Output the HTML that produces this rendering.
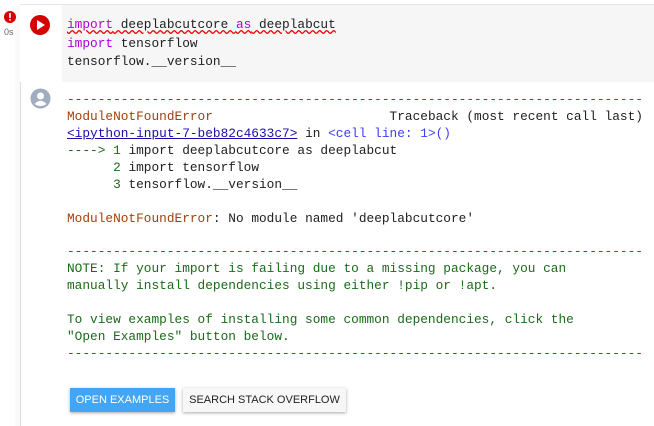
<!DOCTYPE html>
<html><head><style>
body{margin:0;width:654px;height:426px;background:#fff;overflow:hidden;position:relative;font-family:"Liberation Mono",monospace;}
.mono{font-family:"Liberation Mono",monospace;font-size:12.8px;white-space:pre;position:absolute;left:67px;}
.code{top:16px;line-height:18.5px;color:#212121;}
.out{top:92px;line-height:16.93px;color:#212121;}
.kw{color:#af00db}
.r{color:#a0410d}
.g{color:#1a6b1a}
.b{color:#3c3cff}
.lk{color:#1a0dab;text-decoration:underline}
.red{color:#b22222}
.btn{position:absolute;top:388px;height:24px;font-family:"Liberation Sans",sans-serif;font-size:11px;line-height:24px;text-align:center;box-shadow:0 1px 3px rgba(0,0,0,.35);}
</style></head><body>
<div style="position:absolute;left:20px;top:4px;width:634px;height:1px;background:#e4e4e4"></div>
<div style="position:absolute;left:20px;top:5px;width:634px;height:77px;background:#f6f6f6"></div>
<div style="position:absolute;left:15px;top:5px;width:5px;height:421px;background:#fafafa;border-right:1px solid #dcdcdc"></div>
<div style="position:absolute;left:20px;top:5px;width:42px;height:77px;background:#fff"></div>
<svg style="position:absolute;left:0;top:10px" width="20" height="30"><circle cx="10" cy="7" r="6" fill="#d50000"/><rect x="9.2" y="3" width="1.6" height="5" fill="#fff"/><rect x="9.2" y="9" width="1.6" height="1.6" fill="#fff"/><text x="4" y="25" font-family="Liberation Sans" font-size="9" fill="#666">0s</text></svg>
<svg style="position:absolute;left:29px;top:14px" width="22" height="22"><circle cx="11" cy="11" r="10" fill="#d50000"/><path d="M8 6 L16 11 L8 16Z" fill="#fff"/></svg>
<svg style="position:absolute;left:30px;top:88px" width="22" height="22"><circle cx="10.5" cy="10.5" r="10" fill="#a0acc0"/><circle cx="10.5" cy="8" r="3.5" fill="#fff"/><path d="M4.5 16 Q10.5 9.5 16.5 16 Q10.5 20 4.5 16Z" fill="#fff"/></svg>
<div class="mono code"><span class="kw" style="text-decoration:underline wavy #e00;">import</span><span style="text-decoration:underline wavy #e00;"> deeplabcutcore <span class="kw">as</span> deeplabcut</span>
<span class="kw">import</span> tensorflow
tensorflow.__version__</div>
<div class="mono out"><span class="red">---------------------------------------------------------------------------</span>
<span class="r">ModuleNotFoundError</span>                       Traceback (most recent call last)
<span class="lk">&lt;ipython-input-7-beb82c4633c7&gt;</span> in <span class="b">&lt;cell line: 1&gt;()</span>
<span class="g">----&gt; 1</span> import deeplabcutcore as deeplabcut
<span class="g">      2</span> import tensorflow
<span class="g">      3</span> tensorflow.__version__

<span class="r">ModuleNotFoundError</span>: No module named 'deeplabcutcore'

<span class="red">---------------------------------------------------------------------------</span>
<span class="g">NOTE: If your import is failing due to a missing package, you can
manually install dependencies using either !pip or !apt.

To view examples of installing some common dependencies, click the
"Open Examples" button below.</span>
<span class="red">---------------------------------------------------------------------------</span></div>
<div class="btn" style="left:70px;width:105px;background:#42a5f5;color:#fff">OPEN EXAMPLES</div>
<div class="btn" style="left:183px;width:163px;background:#f7f7f7;color:#222">SEARCH STACK OVERFLOW</div>
</body></html>
